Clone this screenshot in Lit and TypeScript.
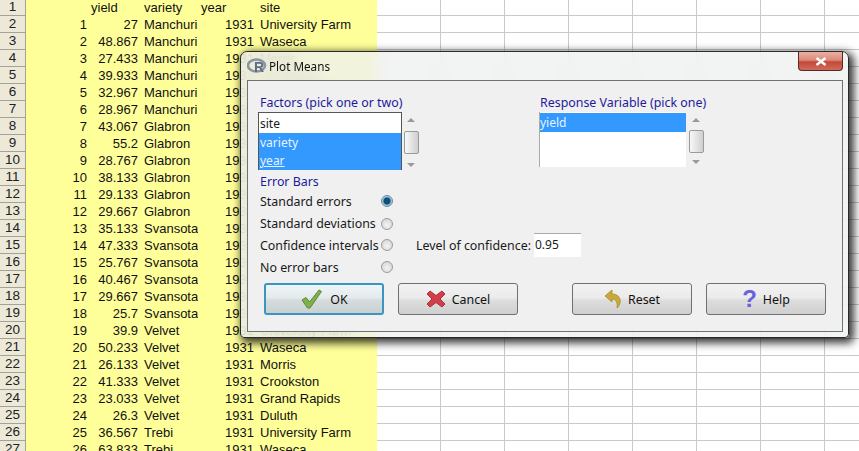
import { LitElement, html, css } from "lit";
import { customElement } from "lit/decorators.js";

const rows: [string, string, string, string][] = [
  ["27", "Manchuri", "1931", "University Farm"],
  ["48.867", "Manchuri", "1931", "Waseca"],
  ["27.433", "Manchuri", "1931", "Morris"],
  ["39.933", "Manchuri", "1931", "Crookston"],
  ["32.967", "Manchuri", "1931", "Grand Rapids"],
  ["28.967", "Manchuri", "1931", "Duluth"],
  ["43.067", "Glabron", "1931", "University Farm"],
  ["55.2", "Glabron", "1931", "Waseca"],
  ["28.767", "Glabron", "1931", "Morris"],
  ["38.133", "Glabron", "1931", "Crookston"],
  ["29.133", "Glabron", "1931", "Grand Rapids"],
  ["29.667", "Glabron", "1931", "Duluth"],
  ["35.133", "Svansota", "1931", "University Farm"],
  ["47.333", "Svansota", "1931", "Waseca"],
  ["25.767", "Svansota", "1931", "Morris"],
  ["40.467", "Svansota", "1931", "Crookston"],
  ["29.667", "Svansota", "1931", "Grand Rapids"],
  ["25.7", "Svansota", "1931", "Duluth"],
  ["39.9", "Velvet", "1931", "University Farm"],
  ["50.233", "Velvet", "1931", "Waseca"],
  ["26.133", "Velvet", "1931", "Morris"],
  ["41.333", "Velvet", "1931", "Crookston"],
  ["23.033", "Velvet", "1931", "Grand Rapids"],
  ["26.3", "Velvet", "1931", "Duluth"],
  ["36.567", "Trebi", "1931", "University Farm"],
  ["63.833", "Trebi", "1931", "Waseca"],
];

const blanks = [0, 1, 2, 3, 4, 5, 6, 7];

@customElement("app-root")
export class AppRoot extends LitElement {
  static styles = css`
    :host {
      display: block;
      position: relative;
      width: 859px;
      height: 451px;
      overflow: hidden;
      background: #fff;
      font-family: "Liberation Sans", Arial, sans-serif;
      font-size: 13px;
      color: #111;
    }
    .sheet { margin-top: -1px; display: flex; flex-direction: column; }
    .row {
      display: grid;
      grid-template-columns: 26px 64px 51px 57px 59px 120px repeat(8, 64px);
      height: 17px;
      line-height: 17px;
      white-space: nowrap;
    }
    .hd {
      background: #ece9d8;
      border-right: 1px solid #a5a292;
      border-bottom: 1px solid #a5a292;
      box-sizing: border-box;
      text-align: center;
      font-size: 13.5px;
      color: #222;
      line-height: 16px;
    }
    .c { background: #ffff99; padding: 0 3px; overflow: hidden; }
    .r { text-align: right; }
    .e { border-right: 1px solid #c9c9c9; border-bottom: 1px solid #c9c9c9; box-sizing: border-box; }
    .head { padding-left: 1px; }

    .win {
      position: absolute;
      left: 240px;
      top: 51px;
      width: 609px;
      height: 287px;
      box-sizing: border-box;
      border: 1px solid #2a2a2a;
      border-radius: 7px 7px 4px 4px;
      background: rgba(238, 240, 240, 0.78);
      backdrop-filter: blur(7px);
      box-shadow: 3px 3px 9px 2px rgba(0, 0, 0, 0.78);
      padding: 0 5px 5px 6px;
      display: flex;
      flex-direction: column;
      font-family: "Noto Sans", Tahoma, sans-serif;
      font-size: 12.4px;
      color: #1a1a1a;
    }
    .title { height: 28px; flex: none; display: flex; align-items: center; gap: 2px; position: relative; }
    .title span { font-size: 11.7px; color: #111; }
    .close {
      position: absolute;
      right: 0;
      top: 0;
      width: 45px;
      height: 19px;
      box-sizing: border-box;
      border: 1px solid #5a2a22;
      border-top: none;
      border-radius: 0 0 4px 4px;
      background: linear-gradient(#e8b0a4 0%, #dc8a7a 45%, #c24a38 55%, #cf6a5c 100%);
      display: flex;
      align-items: center;
      justify-content: center;
    }
    .panel {
      flex: 1;
      background: #f0f0f0;
      border: 1px solid #6f7275;
      padding: 14px 16px 16px 12px;
      display: flex;
      flex-direction: column;
      min-height: 0;
    }
    .top { display: flex; height: 80px; }
    .col { display: flex; flex-direction: column; }
    .col.a { width: 280px; }
    .lbl { color: #1f1a9c; line-height: 16px; height: 17px; }
    .listwrap { display: flex; gap: 1px; margin-left: -2px; }
    .col.b .listwrap { gap: 2px; margin-left: -1px; }
    .list {
      width: 144px;
      height: 58px;
      box-sizing: border-box;
      border: 1px solid #555;
      background: #fff;
      padding-top: 1px;
      font-size: 12px;
    }
    .col.b .list { width: 147px; height: 55px; border: none; border-left: 1px solid #aaa; padding-top: 1px; }
    .col.b .it { padding-left: 0; }
    .it { height: 18.5px; line-height: 20px; padding-left: 1px; }
    .sel { background: #3399ff; color: #e8f2ff; }
    .u { text-decoration: underline; }
    .sb { width: 16px; display: flex; flex-direction: column; align-items: center; justify-content: space-between; padding: 6px 0 3px; box-sizing: border-box; }
    .col.b .sb { height: 55px; }
    .ar { width: 0; height: 0; border-left: 4px solid transparent; border-right: 4px solid transparent; }
    .ar.up { border-bottom: 4px solid #9a9a9a; }
    .ar.dn { border-top: 4px solid #9a9a9a; }
    .thumb { width: 13px; height: 21px; border: 1px solid #9a9a9a; border-radius: 2px; background: linear-gradient(90deg, #f8f8f8, #cfcfcf); }
    .eb { height: 16px; }
    .opts {
      display: grid;
      grid-template-columns: 121px 35px 116px auto;
      grid-template-rows: 24px 21px 22px 22px;
      align-items: center;
      margin-top: -1px;
    }
    .radio {
      width: 12px; height: 12px; border-radius: 50%;
      border: 1px solid #9c9c9c;
      background: radial-gradient(circle at 50% 60%, #f4f4f4, #cfcfcf);
      box-sizing: border-box;
    }
    .radio.on { background: radial-gradient(circle, #0f4f78 0 3px, #7fb6d6 4px, #e8f0f4 6px); border-color: #6f8a9a; }
    .conf { white-space: nowrap; text-align: left; }
    .inp { width: 47px; height: 24px; box-sizing: border-box; background: #fff; border-top: 1px solid #aaa; line-height: 22px; padding-left: 1px; margin-left: 2px; font-size: 12px; }
    .btns { display: flex; margin-top: 5px; padding-left: 4px; }
    .btn {
      width: 120px; height: 32px; box-sizing: border-box;
      border: 1px solid #707070; border-radius: 3px;
      background: linear-gradient(#f2f2f2 0%, #ebebeb 45%, #dddddd 55%, #cfcfcf 100%);
      display: flex; align-items: center; justify-content: center; gap: 6px;
      color: #111;
    }
    .btn.ok { border: 2px solid #3c95c0; background: linear-gradient(#eef5f8 0%, #e4eaec 45%, #d6dcde 55%, #c8d0d2 100%); }
    .g1 { margin-left: 14px; }
    .g2 { margin-left: 54px; }
    .q { color: #6a63e0; font-weight: 700; font-size: 24px; line-height: 24px; font-family: "Liberation Sans", sans-serif; }
    svg { display: block; flex: none; }
  `;

  private rLogo() {
    return html`<svg width="20" height="18" viewBox="0 0 20 18">
      <ellipse cx="9.5" cy="8.5" rx="8.5" ry="6" fill="none" stroke="#8d94a3" stroke-width="2.6"/>
      <text x="7" y="14.5" font-family="Liberation Sans" font-weight="700" font-size="14" fill="#5f6c86">R</text>
    </svg>`;
  }

  render() {
    return html`
      <div class="sheet">
        <div class="row">
          <div class="hd">1</div>
          <div class="c"></div>
          <div class="c head">yield</div>
          <div class="c">variety</div>
          <div class="c">year</div>
          <div class="c">site</div>
          ${blanks.map(() => html`<div class="e"></div>`)}
        </div>
        ${rows.map(
          (r, i) => html`<div class="row">
            <div class="hd">${i + 2}</div>
            <div class="c r">${i + 1}</div>
            <div class="c r">${r[0]}</div>
            <div class="c">${r[1]}</div>
            <div class="c r">${r[2]}</div>
            <div class="c">${r[3]}</div>
            ${blanks.map(() => html`<div class="e"></div>`)}
          </div>`
        )}
      </div>

      <div class="win">
        <div class="title">
          ${this.rLogo()}
          <span>Plot Means</span>
          <div class="close">
            <svg width="12" height="9" viewBox="0 0 12 9"><path d="M1.5 1 L10.5 8 M10.5 1 L1.5 8" stroke="#fff" stroke-width="2.4"/></svg>
          </div>
        </div>
        <div class="panel">
          <div class="top">
            <div class="col a">
              <div class="lbl">Factors (pick one or two)</div>
              <div class="listwrap">
                <div class="list">
                  <div class="it">site</div>
                  <div class="it sel">variety</div>
                  <div class="it sel"><span class="u">year</span></div>
                </div>
                <div class="sb"><div class="ar up"></div><div class="thumb"></div><div class="ar dn"></div></div>
              </div>
            </div>
            <div class="col b">
              <div class="lbl">Response Variable (pick one)</div>
              <div class="listwrap">
                <div class="list"><div class="it sel">yield</div></div>
                <div class="sb"><div class="ar up"></div><div class="thumb"></div><div class="ar dn"></div></div>
              </div>
            </div>
          </div>
          <div class="lbl eb">Error Bars</div>
          <div class="opts">
            <div>Standard errors</div><div class="radio on"></div><div></div><div></div>
            <div>Standard deviations</div><div class="radio"></div><div></div><div></div>
            <div>Confidence intervals</div><div class="radio"></div>
            <div class="conf">Level of confidence:</div><div class="inp">0.95</div>
            <div>No error bars</div><div class="radio"></div><div></div><div></div>
          </div>
          <div class="btns">
            <div class="btn ok">
              <svg width="24" height="20" viewBox="0 0 24 20"><path d="M2 11 L6 8.5 L9.5 13 L19 1 L21.5 2.5 L10 19 L7.5 19 Z" fill="#7fb04a" stroke="#5d8a35" stroke-width="1"/></svg>
              <span>OK</span>
            </div>
            <div class="btn g1">
              <svg width="20" height="18" viewBox="0 0 20 18"><path d="M1 4 L4 1 L10 5.5 L16 1 L19 4 L14 9 L19 14 L16 17 L10 12.5 L4 17 L1 14 L6 9 Z" fill="#d23f4a" stroke="#a8303a" stroke-width="1"/></svg>
              <span>Cancel</span>
            </div>
            <div class="btn g2">
              <svg width="18" height="20" viewBox="0 0 18 20"><path d="M1 7 L8 1 L8 5 C14 5 17 9 16 14 C15.5 16 14.5 18 13 19 C14 14 12 10 8 10 L8 13 Z" fill="#c9a93a" stroke="#a88a28" stroke-width="0.8"/></svg>
              <span>Reset</span>
            </div>
            <div class="btn g1">
              <span class="q">?</span>
              <span>Help</span>
            </div>
          </div>
        </div>
      </div>
    `;
  }
}
